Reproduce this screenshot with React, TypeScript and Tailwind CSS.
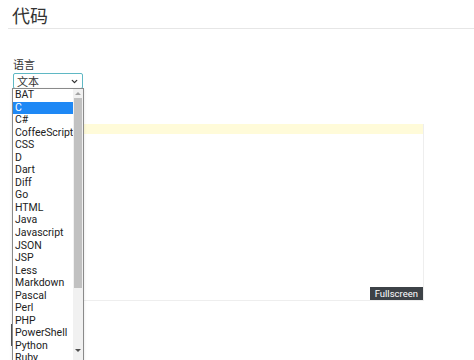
import { ChevronDown } from "lucide-react";

const langs = [
  "BAT", "C", "C#", "CoffeeScript", "CSS", "D", "Dart", "Diff", "Go", "HTML",
  "Java", "Javascript", "JSON", "JSP", "Less", "Markdown", "Pascal", "Perl",
  "PHP", "PowerShell", "Python", "Ruby",
];

const App = () => {
  return (
    <div className="relative w-[474px] h-[360px] overflow-hidden bg-white font-['Roboto','Noto_Sans_CJK_SC',sans-serif] text-[#333]">
      <h1 className="pl-3 pt-[4px] text-[18px] leading-[22px] text-[#333] font-['Noto_Sans_CJK_SC',sans-serif]">代码</h1>
      <div className="ml-2 mt-[2px] border-b border-[#e6e6e6]" />

      <div className="pl-[13px] pt-[28px]">
        <div className="text-[11px] leading-[14px] font-['Noto_Sans_CJK_SC',sans-serif]">语言</div>
        <div className="mt-[2px] w-[70px] h-[16px] border border-[#5fb8c4] rounded-[2px] flex items-center justify-between px-[3px] text-[11px] font-['Noto_Sans_CJK_SC',sans-serif]">
          <span className="leading-none">文本</span>
          <ChevronDown size={9} strokeWidth={3.5} />
        </div>
      </div>

      <div className="ml-[83px] mt-[35px] w-[341px] h-[177px] border-l border-r border-b border-[#eeeeee] flex flex-col">
        <div className="h-[10px] bg-[#fffbd9]" />
        <div className="flex-1" />
        <div className="flex justify-end">
          <div className="bg-[#3d4247] text-white text-[9.5px] leading-[13px] px-[5px] font-['Roboto',sans-serif]">Fullscreen</div>
        </div>
      </div>

      <div className="ml-[11px] mt-[23px] w-[2px] h-[22px] bg-[#555]" />

      <div className="absolute left-[12px] top-[88px] w-[72px] h-[280px] border border-[#8a8a8a] bg-white flex shadow-sm">
        <div className="flex-1 min-w-0 overflow-hidden">
          {langs.map((l) => (
            <div
              key={l}
              className={`h-[12.55px] leading-[12.55px] pl-[2px] whitespace-nowrap text-[10.5px] ${l === "C" ? "bg-[#1e88f5] text-white" : "text-[#222]"}`}
            >
              {l}
            </div>
          ))}
        </div>
        <div className="w-[10px] shrink-0 bg-[#f1f1f1] flex flex-col items-center">
          <div className="h-[9px] flex items-center">
            <div className="w-0 h-0 border-l-[3px] border-r-[3px] border-b-[3px] border-l-transparent border-r-transparent border-b-[#a3a3a3]" />
          </div>
          <div className="w-[8px] h-[190px] bg-[#c1c1c1]" />
          <div className="flex-1" />
          <div className="h-[9px] mb-[12px] flex items-center">
            <div className="w-0 h-0 border-l-[3px] border-r-[3px] border-t-[3px] border-l-transparent border-r-transparent border-t-[#505050]" />
          </div>
        </div>
      </div>
    </div>
  );
};

export default App;
